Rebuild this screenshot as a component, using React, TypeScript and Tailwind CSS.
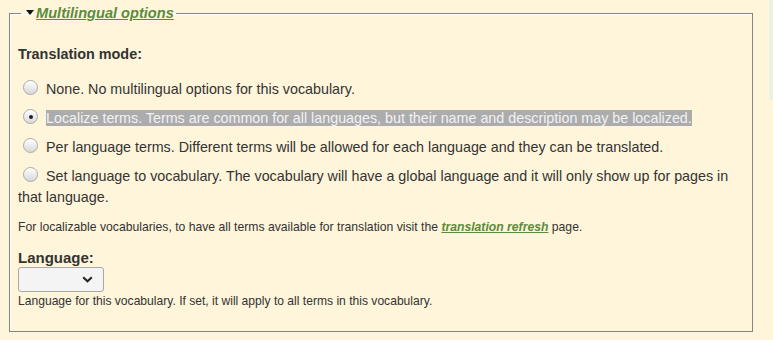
import React from 'react';

const options = [
  { label: 'None. No multilingual options for this vocabulary.', checked: false },
  { label: 'Localize terms. Terms are common for all languages, but their name and description may be localized.', checked: true },
  { label: 'Per language terms. Different terms will be allowed for each language and they can be translated.', checked: false },
  { label: 'Set language to vocabulary. The vocabulary will have a global language and it will only show up for pages in that language.', checked: false },
];

function Radio({ checked }: { checked: boolean }) {
  return (
    <span className="relative inline-block w-[15px] h-[15px] ml-[5px] mr-[8px] align-[-1px] rounded-full border border-[#a9a9a9] bg-[linear-gradient(#ffffff,#d8d8d8)] shadow-[inset_0_1px_0_#fff]">
      {checked && <span className="absolute left-[4.5px] top-[4.5px] w-[4px] h-[4px] rounded-full bg-[#222]" />}
    </span>
  );
}

export default function App() {
  return (
    <div className="relative w-[773px] h-[340px] bg-[#fff5da] text-[#333] overflow-hidden" style={{ fontFamily: '"Liberation Sans", Arial, sans-serif' }}>
      <div className="absolute right-0 top-0 w-[4px] h-[100px] bg-[#eef0e2]" />
      <fieldset className="ml-[9px] mt-[3px] w-[744px] h-[329px] border border-[#858585] shadow-[inset_1px_1px_0_#fff] pl-[8px] pr-[8px]">
        <legend className="ml-[3px] pl-[5px] pr-[2px] leading-[20px]">
          <span className="inline-block align-[3px] w-0 h-0 border-l-[4px] border-r-[4px] border-t-[5px] border-l-transparent border-r-transparent border-t-[#111] mr-[2px]" />
          <a className="text-[14.6px] font-bold italic underline text-[#5b8c3a] decoration-[#5b8c3a]">Multilingual options</a>
        </legend>

        <div className="mt-[21px] text-[14.4px] font-bold leading-[20px]">Translation mode:</div>

        <div className="mt-[15px] text-[14.3px]">
          {options.map((o, i) => (
            <div key={i} className="leading-[21px] mb-[8px]">
              <Radio checked={o.checked} />
              <span className={o.checked ? 'bg-[#acacac] text-[#f2f2f2]' : ''}>{o.label}</span>
            </div>
          ))}
        </div>

        <div className="mt-[11px] text-[12.2px] leading-[16px]">
          For localizable vocabularies, to have all terms available for translation visit the{' '}
          <a className="font-bold italic underline text-[#5b8c3a]">translation refresh</a> page.
        </div>

        <div className="mt-[14px] text-[15px] font-bold leading-[18px]">Language:</div>
        <div className="w-[86px] h-[25px] rounded-[3px] border border-[#a8a8a8] bg-[#f4f4f4] flex items-center justify-end pr-[10px]">
          <svg width="11" height="7" viewBox="0 0 11 7">
            <path d="M1.2 1.2 L5.5 5.3 L9.8 1.2" fill="none" stroke="#222" strokeWidth="2" />
          </svg>
        </div>
        <div className="mt-[1px] text-[12.1px] leading-[16px]">
          Language for this vocabulary. If set, it will apply to all terms in this vocabulary.
        </div>
      </fieldset>
    </div>
  );
}
